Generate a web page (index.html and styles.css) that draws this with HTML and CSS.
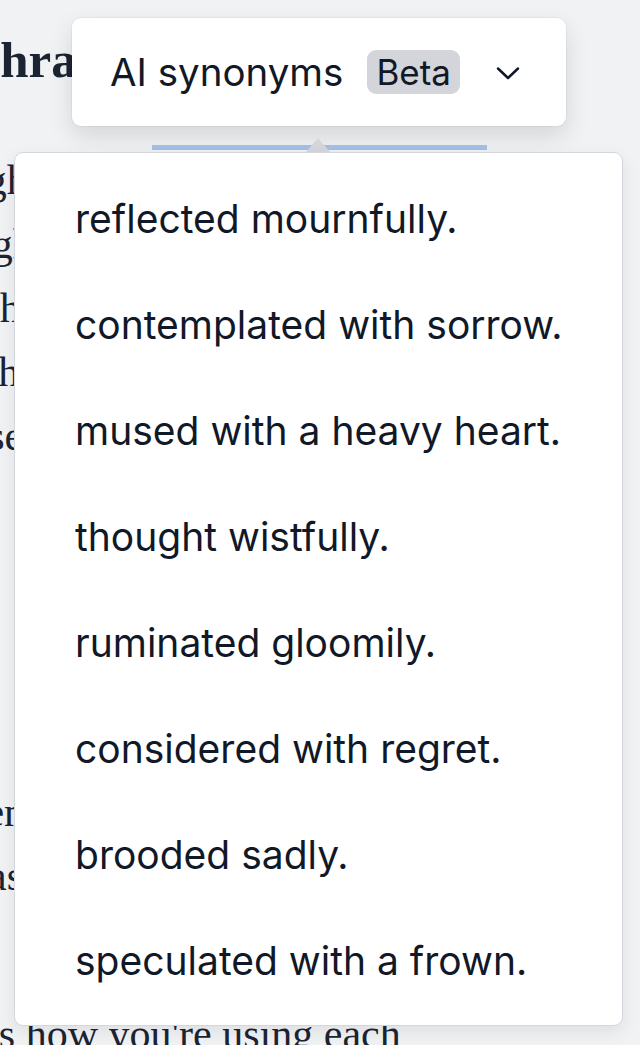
FILE: index.html
```html
<!DOCTYPE html>
<html lang="en">
<head>
    <meta charset="UTF-8">
    <meta name="viewport" content="width=device-width, initial-scale=1.0">
    <title>AI synonyms</title>
    <link rel="stylesheet" href="styles.css">
</head>
<body>

<!-- Document behind the popover -->
<div class="doc">
    <h2 class="doc-title">Paraphrase</h2>
    <p class="doc-para">
        <span class="line">As the evening light faded, the old man sat by the</span>
        <span class="line">window and thought. Dusk settled over the yard</span>
        <span class="line">and he pondered the years that had gone by so</span>
        <span class="line">quickly. His wife had often said that nothing</span>
        <span class="line">is ever lost, only set aside for a little while.</span>
    </p>
    <p class="doc-para doc-para-2">
        <span class="line">Try it with a sentence of your own and see the</span>
        <span class="line">way the right phrase helps your reader keep up.</span>
    </p>
    <p class="doc-para doc-para-3">
        <span class="line">this shows how you're using each</span>
    </p>
</div>

<!-- Mode selector -->
<div class="mode-card">
    <span class="mode-label">AI synonyms</span>
    <span class="badge">Beta</span>
    <svg class="chevron" width="24" height="15" viewBox="0 0 24 15" fill="none">
        <path d="M2 2.5 L12 12 L22 2.5" stroke="#111827" stroke-width="2.5" stroke-linecap="round" stroke-linejoin="round"/>
    </svg>
</div>

<!-- Selected phrase underline + popover arrow -->
<div class="selection"></div>
<div class="arrow"></div>

<!-- Suggestions -->
<ul class="suggestions">
    <li>reflected mournfully.</li>
    <li>contemplated with sorrow.</li>
    <li>mused with a heavy heart.</li>
    <li>thought wistfully.</li>
    <li>ruminated gloomily.</li>
    <li>considered with regret.</li>
    <li>brooded sadly.</li>
    <li>speculated with a frown.</li>
</ul>

</body>
</html>
```

FILE: styles.css
```css
html, body {
    margin: 0;
    padding: 0;
}
body {
    background-color: #f1f2f4;
    font-family: "Liberation Serif", serif;
    color: #1c2333;
    height: 1045px;
    overflow: hidden;
    position: relative;
}
.doc {
    margin-left: -300px;
    width: 880px;
    overflow: hidden;
    font-size: 42px;
}
.doc-title {
    margin: 37px 0 0 0;
    font-size: 51px;
    line-height: 46px;
    font-weight: bold;
    padding-left: 167px;
    white-space: nowrap;
}
.doc-para {
    margin: 65px 0 0 0;
    line-height: 64px;
}
.doc-para .line {
    display: block;
    white-space: nowrap;
}
.doc-para-2 {
    margin-top: 312px;
}
.doc-para-3 {
    margin-top: 94px;
    padding-left: 139px;
}

.mode-card {
    position: absolute;
    left: 72px;
    top: 18px;
    width: 494px;
    height: 108px;
    box-sizing: border-box;
    background: #fff;
    border-radius: 9px;
    box-shadow: 0 0 0 1px rgba(0, 0, 0, 0.04), 0 10px 24px rgba(0, 0, 0, 0.12);
    display: flex;
    align-items: center;
    padding-left: 38px;
    font-family: Inter, "Noto Sans", sans-serif;
    color: #111827;
}
.mode-label {
    font-size: 38.5px;
}
.badge {
    margin-left: 24px;
    background: #d3d5db;
    border-radius: 9px;
    font-size: 35px;
    line-height: 44px;
    padding: 0 9px;
}
.chevron {
    margin-left: 36px;
    margin-top: 2px;
}

.selection {
    position: absolute;
    left: 152px;
    top: 145px;
    width: 335px;
    height: 5px;
    background: #a3bfe6;
}
.arrow {
    position: absolute;
    left: 306px;
    top: 138px;
    width: 0;
    height: 0;
    border-left: 12px solid transparent;
    border-right: 12px solid transparent;
    border-bottom: 14px solid #d4d6db;
}

.suggestions {
    position: absolute;
    left: 14px;
    top: 152px;
    width: 609px;
    height: 874px;
    box-sizing: border-box;
    margin: 0;
    padding: 12px 0;
    list-style: none;
    background: #fff;
    border: 1px solid #d3d6dc;
    border-radius: 9px;
    box-shadow: 0 6px 18px rgba(0, 0, 0, 0.08);
    font-family: Inter, "Noto Sans", sans-serif;
    color: #111827;
}
.suggestions li {
    height: 106px;
    display: flex;
    align-items: center;
    padding-left: 60px;
    font-size: 39px;
}
```
